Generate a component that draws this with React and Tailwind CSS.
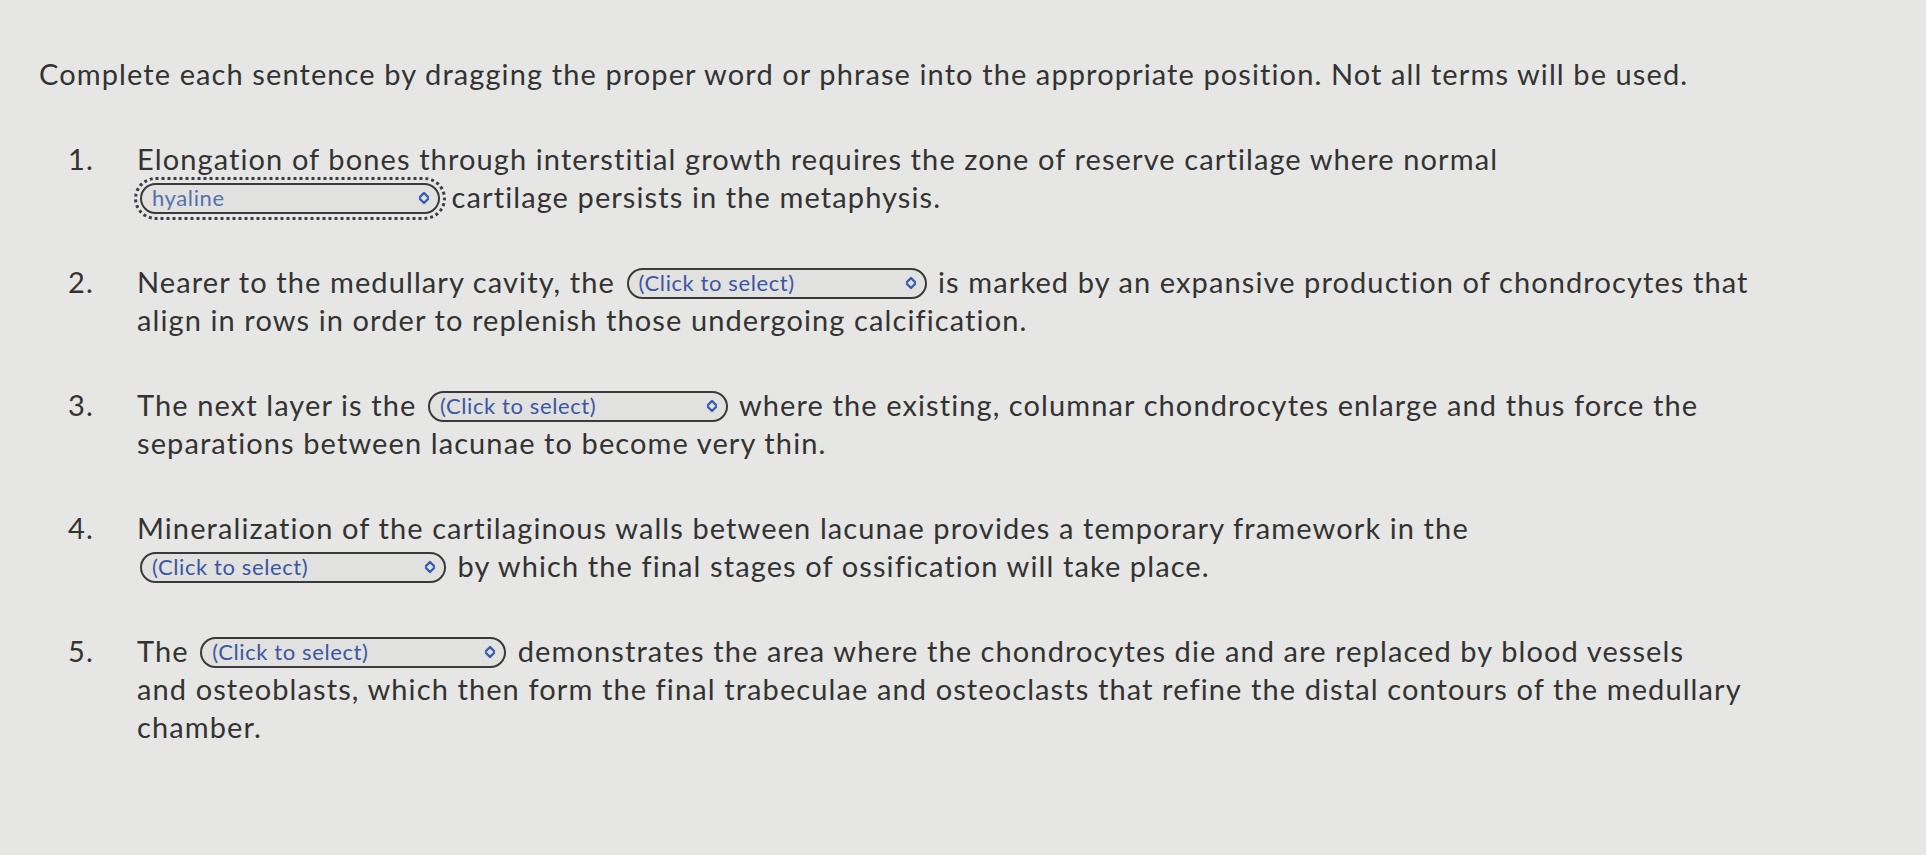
const Chevron = () => (
  <svg width="12" height="14" viewBox="0 0 12 14" fill="none" stroke="#3b5bb0" strokeWidth="2.4" strokeLinecap="round" strokeLinejoin="round">
    <path d="M2 6 L6 2 L10 6" />
    <path d="M2 8 L6 12 L10 8" />
  </svg>
);

const Select = ({ value, focused, width = 'w-[300px]' }) => (
  <span
    className={
      'inline-flex items-center justify-between h-[31px] rounded-full border-2 border-[#3a3a3a] bg-[#e1e1df] pl-[10px] pr-2 align-middle mx-[3px] -mt-[5px] tracking-normal ' +
      width +
      (focused ? ' outline-dotted outline-[3px] outline-offset-[3px] outline-[#3a3d4a]' : '')
    }
  >
    <span className={'text-[22px] leading-none tracking-[0.6px] ' + (focused ? 'text-[#5670ad]' : 'text-[#3b56a4]')}>{value}</span>
    <Chevron />
  </span>
);

const items = [
  <>
    Elongation of bones through interstitial growth requires the zone of reserve cartilage where normal
    <br />
    <Select value="hyaline" focused /> cartilage persists in the metaphysis.
  </>,
  <>
    Nearer to the medullary cavity, the <Select value="(Click to select)" /> is marked by an expansive production of
    chondrocytes that
    <br />
    align in rows in order to replenish those undergoing calcification.
  </>,
  <>
    The next layer is the <Select value="(Click to select)" /> where the existing, columnar chondrocytes enlarge and
    thus force the
    <br />
    separations between lacunae to become very thin.
  </>,
  <>
    Mineralization of the cartilaginous walls between lacunae provides a temporary framework in the
    <br />
    <Select value="(Click to select)" width="w-[306px]" /> by which the final stages of ossification will take place.
  </>,
  <>
    The <Select value="(Click to select)" width="w-[306px]" /> demonstrates the area where the chondrocytes die and
    are replaced by blood vessels
    <br />
    and osteoblasts, which then form the final trabeculae and osteoclasts that refine the distal contours of the
    medullary
    <br />
    chamber.
  </>,
];

export default function App() {
  return (
    <div className="min-h-screen w-full bg-[#e6e6e4] text-[#333333] pl-[39px] pt-[55px]" style={{ fontFamily: 'Lato, "Open Sans", sans-serif' }}>
      <p className="text-[29px] leading-[38px] tracking-[1.1px]">
        Complete each sentence by dragging the proper word or phrase into the appropriate position. Not all terms will be used.
      </p>
      <ol className="mt-[47px] flex flex-col gap-[47px]">
        {items.map((content, i) => (
          <li key={i} className="flex text-[29px] leading-[38px] tracking-[1.1px]">
            <span className="w-[45px] ml-[29px] shrink-0">{i + 1}.</span>
            <div className="ml-[24px] whitespace-nowrap">{content}</div>
          </li>
        ))}
      </ol>
    </div>
  );
}
